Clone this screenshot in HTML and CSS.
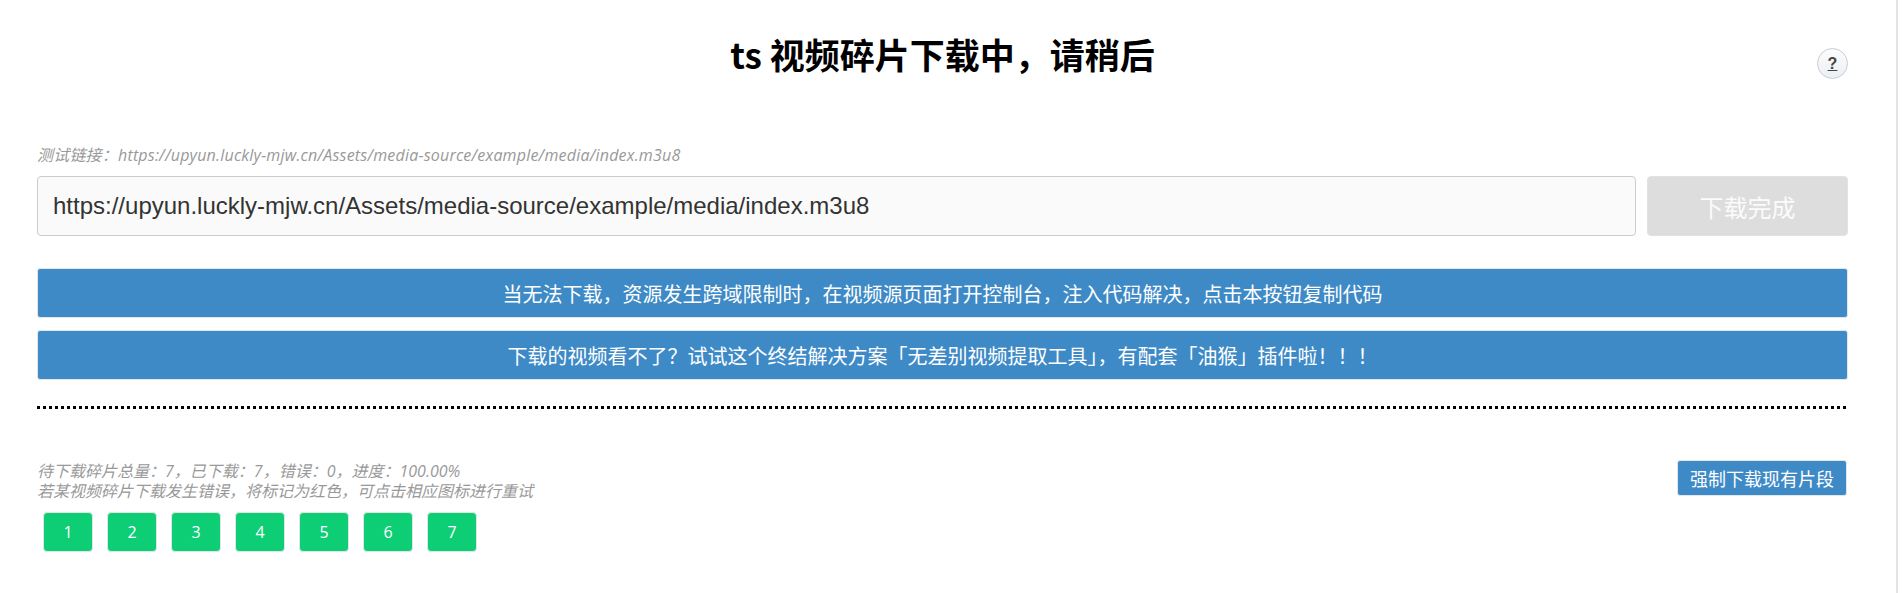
FILE: index.html
```html
<!DOCTYPE html>
<html lang="zh-CN">
<head>
<meta charset="utf-8">
<title>ts 视频碎片下载</title>
<link rel="stylesheet" href="styles.css">
</head>
<body>
<div class="wrap">
  <header class="header">
    <h1 class="title">ts 视频碎片下载中，请稍后</h1>
    <div class="help"><span>?</span></div>
  </header>

  <div class="hint">测试链接：https://upyun.luckly-mjw.cn/Assets/media-source/example/media/index.m3u8</div>

  <div class="form">
    <input class="url" type="text" value="https://upyun.luckly-mjw.cn/Assets/media-source/example/media/index.m3u8">
    <button class="done" type="button">下载完成</button>
  </div>

  <div class="tips">
    <div class="tip">当无法下载，资源发生跨域限制时，在视频源页面打开控制台，注入代码解决，点击本按钮复制代码</div>
    <div class="tip">下载的视频看不了？试试这个终结解决方案「无差别视频提取工具」，有配套「油猴」插件啦！！！</div>
  </div>

  <div class="divider"></div>

  <div class="status">
    <div class="stats">
      <div>待下载碎片总量：7，已下载：7，错误：0，进度：100.00%</div>
      <div>若某视频碎片下载发生错误，将标记为红色，可点击相应图标进行重试</div>
    </div>
    <button class="force" type="button">强制下载现有片段</button>
  </div>

  <div class="chunks">
    <div class="chunk">1</div>
    <div class="chunk">2</div>
    <div class="chunk">3</div>
    <div class="chunk">4</div>
    <div class="chunk">5</div>
    <div class="chunk">6</div>
    <div class="chunk">7</div>
  </div>
</div>
</body>
</html>
```

FILE: styles.css
```css
html {
  background: #fff;
}

body {
  margin: 0;
  width: 1896px;
  min-height: 593px;
  border-right: 2px solid #e4e4e4;
  font-family: "Open Sans", "Noto Sans CJK SC", sans-serif;
  background: #fff;
}

.wrap {
  margin-left: 37px;
  width: 1811px;
  padding-top: 36px;
}

.header {
  display: grid;
  grid-template-columns: 1fr auto 1fr;
  align-items: start;
  height: 35px;
}

.title {
  grid-column: 2;
  margin: 0;
  font-family: "Noto Sans CJK SC", sans-serif;
  font-size: 35px;
  line-height: 35px;
  font-weight: 700;
  color: #000;
}

.help {
  grid-column: 3;
  justify-self: end;
  margin-top: 12px;
  width: 31px;
  height: 31px;
  box-sizing: border-box;
  border-radius: 50%;
  border: 1px solid #c9ccd1;
  background: linear-gradient(#fbfcfd, #eceff3);
  display: flex;
  align-items: center;
  justify-content: center;
  font-family: "Liberation Sans", sans-serif;
  font-size: 16px;
  font-weight: 700;
  color: #444;
  text-decoration: underline;
}

.hint {
  margin-top: 74px;
  font-size: 16px;
  line-height: 20px;
  font-style: italic;
  letter-spacing: 0.2px;
  color: #999;
}

.form {
  display: flex;
  gap: 11px;
  margin-top: 11px;
  height: 60px;
}

.url {
  flex: 1;
  min-width: 0;
  height: 60px;
  box-sizing: border-box;
  margin: 0;
  border: 1px solid #ccc;
  border-radius: 4px;
  background: #fafafa;
  padding: 0 15px;
  font-family: "Liberation Sans", Arial, sans-serif;
  font-size: 24px;
  color: #333;
  outline: none;
}

.done {
  width: 201px;
  height: 60px;
  margin: 0;
  border: 1px solid #e2e2e2;
  border-radius: 4px;
  background: #ddd;
  color: #fbfbfb;
  font-family: "Noto Sans CJK SC", sans-serif;
  font-size: 24px;
}

.tips {
  margin-top: 32px;
  display: flex;
  flex-direction: column;
  gap: 12px;
}

.tip {
  height: 50px;
  box-sizing: border-box;
  border: 1px solid #e3e6ea;
  border-radius: 3px;
  background: #3e8ac7;
  color: #fff;
  font-family: "Noto Sans CJK SC", sans-serif;
  font-size: 20px;
  display: flex;
  align-items: center;
  justify-content: center;
}

.divider {
  margin-top: 26px;
  height: 3px;
  background: repeating-linear-gradient(to right, #000 0 3px, transparent 3px 6px);
}

.status {
  margin-top: 51px;
  display: flex;
  justify-content: space-between;
  align-items: flex-start;
}

.stats {
  margin-top: 1px;
  font-size: 16px;
  line-height: 20px;
  font-style: italic;
  color: #999;
}

.force {
  height: 36px;
  margin: 0 1px 0 0;
  padding: 0 12px;
  border: 1px solid #e3e6ea;
  border-radius: 3px;
  background: #3e8ac7;
  color: #fff;
  font-family: "Noto Sans CJK SC", sans-serif;
  font-size: 18px;
}

.chunks {
  display: flex;
  gap: 14px;
  margin-top: 11px;
  padding-left: 6px;
}

.chunk {
  width: 50px;
  height: 40px;
  box-sizing: border-box;
  border: 1px solid #e2e6e4;
  border-radius: 4px;
  background: #0dcd75;
  color: #fff;
  font-family: "Open Sans", sans-serif;
  font-size: 16px;
  display: flex;
  align-items: center;
  justify-content: center;
}
```
